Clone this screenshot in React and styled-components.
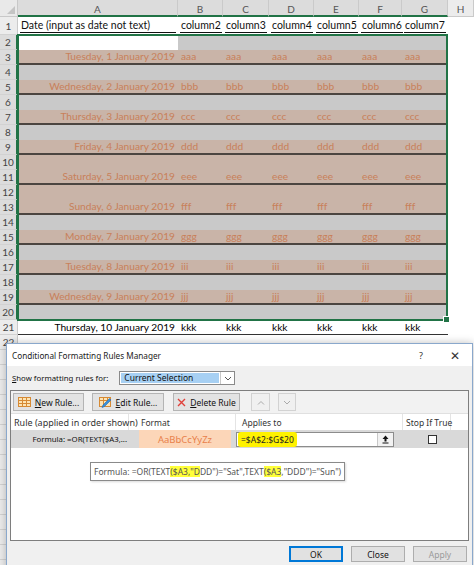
import React from 'react';
import styled, { createGlobalStyle } from 'styled-components';

const GlobalStyle = createGlobalStyle`
  html, body {
    margin: 0;
    padding: 0;
    background: #fff;
  }
  body {
    width: 474px;
    height: 565px;
    overflow: hidden;
  }
`;

const COLS = '18px 160px 45px 46px 45px 45px 43px 46px 1fr';
const GREEN = '#217346';

const TONES = {
  white: '#ffffff',
  gray: '#c9c9c9',
  brown: '#c9b4a8',
};

const Page = styled.div`
  position: relative;
  width: 474px;
  height: 565px;
  overflow: hidden;
`;

/* ---------- spreadsheet ---------- */

const Sheet = styled.div`
  position: relative;
  display: flex;
  flex-direction: column;
  font-family: Lato, 'Liberation Sans', sans-serif;
  font-size: 10.2px;
`;

const Row = styled.div`
  display: grid;
  grid-template-columns: ${COLS};
  height: ${(p) => p.$h}px;
`;

const Corner = styled.div`
  background: #e9e9e9;
  border-right: 1px solid #c8c8c8;
  border-bottom: 1px solid #c8c8c8;
  position: relative;
  &::after {
    content: '';
    position: absolute;
    right: 2px;
    bottom: 2px;
    border-left: 8px solid transparent;
    border-bottom: 8px solid #c4c4c4;
  }
`;

const ColHead = styled.div`
  display: flex;
  align-items: center;
  justify-content: center;
  background: ${(p) => (p.$sel ? '#dcdcdc' : '#ececec')};
  border-right: 1px solid #cacaca;
  border-bottom: ${(p) => (p.$sel ? `2px solid ${GREEN}` : '1px solid #cacaca')};
  color: #555;
  font-size: 10px;
  padding-top: 2px;
  box-sizing: border-box;
`;

const RowHead = styled.div`
  display: flex;
  align-items: center;
  justify-content: center;
  background: ${(p) => (p.$sel ? '#dcdcdc' : '#ececec')};
  border-right: ${(p) => (p.$sel ? `2px solid ${GREEN}` : '1px solid #cacaca')};
  border-bottom: 1px solid #d2d2d2;
  color: #444;
  font-size: 10px;
  box-sizing: border-box;
`;

const Cell = styled.div`
  display: flex;
  align-items: flex-end;
  justify-content: ${(p) => (p.$right ? 'flex-end' : 'flex-start')};
  padding: 0 3px 1px;
  background: ${(p) => TONES[p.$tone || 'white']};
  border-bottom: ${(p) =>
    p.$line === 'thick' ? '2px solid #4b4540' : p.$line === 'thin' ? '1px solid #333' : '0'};
  color: ${(p) => p.$ink || '#000'};
  white-space: nowrap;
  box-sizing: border-box;
  line-height: 12px;
`;

const HeadCell = styled.div`
  display: flex;
  align-items: flex-end;
  padding-bottom: 2px;
  box-sizing: border-box;
  color: #111;
  font-size: 10.5px;
  white-space: nowrap;
  line-height: 12px;
  span {
    display: block;
    flex: 1;
    margin: 0 2px;
    padding: 0 1px 1px;
    border-bottom: 1px solid #111;
  }
`;

const Selection = styled.div`
  position: absolute;
  left: 17px;
  top: 34px;
  width: 431px;
  height: 287px;
  border: 2px solid ${GREEN};
  box-sizing: border-box;
  pointer-events: none;
  &::after {
    content: '';
    position: absolute;
    right: -4px;
    bottom: -4px;
    width: 5px;
    height: 5px;
    background: ${GREEN};
    border: 1px solid #fff;
  }
`;

const dates = {
  3: ['Tuesday, 1 January 2019', 'aaa'],
  5: ['Wednesday, 2 January 2019', 'bbb'],
  7: ['Thursday, 3 January 2019', 'ccc'],
  9: ['Friday, 4 January 2019', 'ddd'],
  11: ['Saturday, 5 January 2019', 'eee'],
  13: ['Sunday, 6 January 2019', 'fff'],
  15: ['Monday, 7 January 2019', 'ggg'],
  17: ['Tuesday, 8 January 2019', 'iii'],
  19: ['Wednesday, 9 January 2019', 'jjj'],
};

const letters = ['A', 'B', 'C', 'D', 'E', 'F', 'G'];

function DataRow({ n }) {
  const entry = dates[n];
  const odd = n % 2 === 1;
  const tone = odd || n === 10 || n === 12 ? 'brown' : 'gray';
  return (
    <Row $h={15}>
      <RowHead $sel>{n}</RowHead>
      {letters.map((l, i) => {
        const t = n === 2 && i === 0 ? 'white' : tone;
        let text = '';
        if (entry) text = i === 0 ? entry[0] : entry[1];
        return (
          <Cell key={l} $tone={t} $line={odd ? 'thick' : ''} $right={i === 0} $ink="#c8805a">
            {text}
          </Cell>
        );
      })}
      <Cell />
    </Row>
  );
}

function Spreadsheet() {
  const rows = [];
  for (let n = 2; n <= 20; n++) rows.push(<DataRow key={n} n={n} />);
  // rows under the dialog: only their header strip shows at the left edge
  const tail = [];
  for (let n = 22; n <= 37; n++) {
    tail.push(
      <Row key={n} $h={15}>
        <RowHead>{n === 22 ? n : ''}</RowHead>
        {letters.map((l) => (
          <Cell key={l} />
        ))}
        <Cell />
      </Row>
    );
  }
  return (
    <Sheet>
      <Row $h={17}>
        <Corner />
        {letters.map((l) => (
          <ColHead key={l} $sel>
            {l}
          </ColHead>
        ))}
        <ColHead>H</ColHead>
      </Row>
      <Row $h={18}>
        <RowHead>1</RowHead>
        <HeadCell>
          <span>Date (input as date not text)</span>
        </HeadCell>
        {[2, 3, 4, 5, 6, 7].map((c) => (
          <HeadCell key={c}>
            <span>column{c}</span>
          </HeadCell>
        ))}
        <Cell />
      </Row>
      {rows}
      <Row $h={15}>
        <RowHead>21</RowHead>
        <Cell $right $line="thin">
          Thursday, 10 January 2019
        </Cell>
        {[1, 2, 3, 4, 5, 6].map((c) => (
          <Cell key={c} $line="thin">
            kkk
          </Cell>
        ))}
        <Cell />
      </Row>
      {tail}
      <Selection />
    </Sheet>
  );
}

/* ---------- dialog ---------- */

const Dialog = styled.div`
  position: absolute;
  left: 6px;
  top: 343px;
  width: 467px;
  height: 232px;
  background: #f0f0f0;
  border: 1px solid #8aa8cc;
  box-shadow: 0 0 8px rgba(0, 0, 0, 0.25);
  box-sizing: border-box;
  display: flex;
  flex-direction: column;
  font-family: 'Noto Sans', 'Open Sans', sans-serif;
  font-size: 8.5px;
  color: #111;
`;

const TitleBar = styled.div`
  height: 22px;
  display: flex;
  align-items: center;
  padding: 0 0 0 5px;
  background: #fff;
  color: #222;
`;

const Title = styled.div`
  flex: 1;
  font-size: 8.2px;
`;

const TitleBtn = styled.div`
  width: 34px;
  text-align: center;
  font-size: ${(p) => p.$size || 10}px;
  color: #333;
`;

const ShowRow = styled.div`
  display: flex;
  align-items: center;
  gap: 8px;
  height: 24px;
  padding-left: 5px;
  font-size: 7.8px;
`;

const Select = styled.div`
  display: flex;
  width: 116px;
  height: 14px;
  margin-left: 3px;
  border: 1px solid #8a8a8a;
  background: #fff;
  box-sizing: border-box;
  font-size: 8.5px;
`;

const SelectValue = styled.div`
  flex: 1;
  margin: 1px;
  padding-left: 3px;
  background: #a7d0f3;
  color: #111;
  line-height: 10px;
`;

const SelectArrow = styled.div`
  width: 13px;
  display: flex;
  align-items: center;
  justify-content: center;
  border-left: 1px solid #c8c8c8;
`;

const Panel = styled.div`
  position: relative;
  margin: 0 3px;
  height: 151px;
  border: 1px solid #7e7e7e;
  background: #fff;
  display: flex;
  flex-direction: column;
  box-sizing: border-box;
`;

const Toolbar = styled.div`
  display: flex;
  align-items: center;
  height: 22px;
  padding: 0 1px;
  background: #f2f2f2;
  border-bottom: 1px solid #e0e0e0;
`;

const ToolButton = styled.div`
  display: flex;
  align-items: center;
  justify-content: center;
  gap: 4px;
  width: ${(p) => p.$w}px;
  height: 18px;
  margin-left: ${(p) => p.$gap}px;
  background: ${(p) => (p.$off ? '#f0f0f0' : '#e3e3e3')};
  border: 1px solid ${(p) => (p.$off ? '#d2d2d2' : '#b4b4b4')};
  box-sizing: border-box;
  color: #111;
`;

const ListHead = styled.div`
  display: grid;
  grid-template-columns: 118px 107px 167px 48px 1fr;
  height: 16px;
  color: #333;
`;

const HeadCol = styled.div`
  display: flex;
  align-items: center;
  padding-left: ${(p) => p.$pad}px;
  border-right: ${(p) => (p.$last ? '0' : '1px solid #e4e4e4')};
  white-space: nowrap;
  font-size: ${(p) => p.$size || 8.5}px;
`;

const RuleRow = styled.div`
  display: grid;
  grid-template-columns: 118px 107px 167px 48px 1fr;
  height: 18px;
  background: #d9d9d9;
`;

const RuleCell = styled.div`
  display: flex;
  align-items: center;
  justify-content: ${(p) => p.$justify || 'flex-start'};
  padding: ${(p) => p.$pad || '0'};
  white-space: nowrap;
  font-size: ${(p) => p.$size || 8.5}px;
`;

const FormatSwatch = styled.div`
  flex: 1;
  align-self: stretch;
  display: flex;
  align-items: center;
  justify-content: center;
  background: #fcd6b8;
  color: #e8804a;
  font-size: 9.5px;
`;

const AppliesBox = styled.div`
  flex: 1;
  display: flex;
  height: 15px;
  background: #fff;
  border: 1px solid #8c8c8c;
  box-sizing: border-box;
  align-items: center;
`;

const Marker = styled.span`
  background: #fff200;
  padding: 2px 3px;
  border-radius: 3px;
  color: #222;
`;

const AppliesText = styled.div`
  flex: 1;
  padding-left: 1px;
`;

const CollapseBtn = styled.div`
  width: 15px;
  height: 13px;
  border-left: 1px solid #c8c8c8;
  display: flex;
  align-items: center;
  justify-content: center;
  background: #f2f2f2;
`;

const Check = styled.div`
  width: 9px;
  height: 9px;
  border: 1px solid #333;
  background: #fff;
  box-sizing: border-box;
`;

const Tooltip = styled.div`
  position: absolute;
  left: 79px;
  top: 71px;
  height: 17px;
  padding: 0 3px;
  display: flex;
  align-items: center;
  background: #fff;
  border: 1px solid #8a8a8a;
  box-shadow: 1px 1px 2px rgba(0, 0, 0, 0.15);
  color: #555;
  white-space: nowrap;
  mark {
    background: #ffff3a;
    color: #555;
  }
`;

const Footer = styled.div`
  display: flex;
  justify-content: flex-end;
  gap: 8px;
  padding: 5px 5px 0 0;
`;

const DlgButton = styled.div`
  width: 54px;
  height: 16px;
  display: flex;
  align-items: center;
  justify-content: center;
  background: #e1e1e1;
  border: ${(p) => (p.$focus ? '2px solid #0078d7' : '1px solid #adadad')};
  color: ${(p) => (p.$off ? '#9a9a9a' : '#111')};
  box-sizing: border-box;
`;

const NewIcon = () => (
  <svg width="13" height="10" viewBox="0 0 13 10">
    <rect x="0.5" y="0.5" width="12" height="9" fill="#fde4b4" stroke="#d68a34" />
    <path d="M0.5 3.5H12.5M0.5 6.5H12.5M4.5 0.5V9.5M8.5 0.5V9.5" stroke="#d68a34" />
  </svg>
);

const EditIcon = () => (
  <svg width="13" height="11" viewBox="0 0 13 11">
    <rect x="0.5" y="0.5" width="11" height="9" fill="#fde4b4" stroke="#d68a34" />
    <path d="M0.5 3.5H11.5M4.5 0.5V9.5M8.5 0.5V5" stroke="#d68a34" />
    <path d="M3 10.5L4 8L10.5 1.5L12 3L5.5 9.5Z" fill="#3b8fd9" stroke="#1f6bb3" strokeWidth="0.6" />
  </svg>
);

const DeleteIcon = () => (
  <svg width="9" height="9" viewBox="0 0 9 9">
    <path d="M1 1L8 8M8 1L1 8" stroke="#e0403a" strokeWidth="1.4" />
  </svg>
);

const Chevron = ({ up, color = '#aaa' }) => (
  <svg width="8" height="5" viewBox="0 0 8 5">
    <path d={up ? 'M1 4.5L4 1.5L7 4.5' : 'M1 1L4 4L7 1'} stroke={color} fill="none" strokeWidth="1" />
  </svg>
);

const CollapseIcon = () => (
  <svg width="7" height="9" viewBox="0 0 7 9">
    <path d="M3.5 0.5L6.5 4H4.5V6.5H2.5V4H0.5Z" fill="#111" />
    <path d="M0.5 8H6.5" stroke="#111" strokeWidth="1" />
  </svg>
);

function RulesDialog() {
  return (
    <Dialog>
      <TitleBar>
        <Title>Conditional Formatting Rules Manager</Title>
        <TitleBtn $size={9}>?</TitleBtn>
        <TitleBtn $size={12}>✕</TitleBtn>
      </TitleBar>
      <ShowRow>
        <span>
          <u>S</u>how formatting rules for:
        </span>
        <Select>
          <SelectValue>Current Selection</SelectValue>
          <SelectArrow>
            <Chevron color="#555" />
          </SelectArrow>
        </Select>
      </ShowRow>
      <Panel>
        <Toolbar>
          <ToolButton $w={71} $gap={1}>
            <NewIcon />
            <span>
              <u>N</u>ew Rule...
            </span>
          </ToolButton>
          <ToolButton $w={72} $gap={8}>
            <EditIcon />
            <span>
              <u>E</u>dit Rule...
            </span>
          </ToolButton>
          <ToolButton $w={67} $gap={9}>
            <DeleteIcon />
            <span>
              <u>D</u>elete Rule
            </span>
          </ToolButton>
          <ToolButton $w={19} $gap={11} $off>
            <Chevron up />
          </ToolButton>
          <ToolButton $w={18} $gap={8} $off>
            <Chevron />
          </ToolButton>
        </Toolbar>
        <ListHead>
          <HeadCol $pad={3} $size={9}>
            Rule (applied in order shown)
          </HeadCol>
          <HeadCol $pad={12}>Format</HeadCol>
          <HeadCol $pad={6}>Applies to</HeadCol>
          <HeadCol $pad={3}>Stop If True</HeadCol>
          <HeadCol $last />
        </ListHead>
        <RuleRow>
          <RuleCell $justify="flex-end" $pad="0 2px 0 0" $size={7.8}>
            Formula: =OR(TEXT($A3,...
          </RuleCell>
          <RuleCell $pad="0 5px 0 10px">
            <FormatSwatch>AaBbCcYyZz</FormatSwatch>
          </RuleCell>
          <RuleCell $pad="0 9px 0 0">
            <AppliesBox>
              <AppliesText>
                <Marker>=$A$2:$G$20</Marker>
              </AppliesText>
              <CollapseBtn>
                <CollapseIcon />
              </CollapseBtn>
            </AppliesBox>
          </RuleCell>
          <RuleCell $justify="center" $pad="0 0 0 10px">
            <Check />
          </RuleCell>
          <RuleCell />
        </RuleRow>
        <Tooltip>
          Formula: =OR(TEXT<mark>($A3,"D</mark>DD")="Sat",TEXT<mark>($A3</mark>,"DDD")="Sun")
        </Tooltip>
      </Panel>
      <Footer>
        <DlgButton $focus>OK</DlgButton>
        <DlgButton>Close</DlgButton>
        <DlgButton $off>Apply</DlgButton>
      </Footer>
    </Dialog>
  );
}

export default function App() {
  return (
    <Page>
      <GlobalStyle />
      <Spreadsheet />
      <RulesDialog />
    </Page>
  );
}
